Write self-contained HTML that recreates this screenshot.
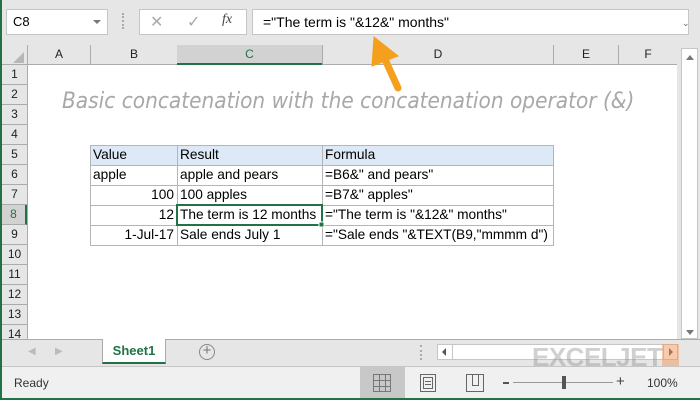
<!DOCTYPE html>
<html><head><meta charset="utf-8"><style>
*{margin:0;padding:0;box-sizing:border-box}
body{width:700px;height:400px;overflow:hidden;background:#e6e6e6;font-family:"Liberation Sans",sans-serif;position:relative}
.a{position:absolute}
.cell{position:absolute;font-size:13.7px;line-height:20px;padding:0 3px;white-space:nowrap;color:#000}
.hd{position:absolute;font-size:12px;text-align:center;line-height:19px;color:#222}
</style></head><body>
<div class="a" style="left:0;top:0;width:2px;height:400px;background:#217346"></div>
<div class="a" style="left:0;top:398px;width:700px;height:2px;background:#217346"></div>
<!-- formula bar -->
<div class="a" style="left:6px;top:9px;width:102px;height:26px;background:#fff;border:1px solid #c6c6c6"></div>
<div class="a" style="left:13px;top:14px;font-size:13px">C8</div>
<div class="a" style="left:93px;top:20px;width:0;height:0;border-left:4px solid transparent;border-right:4px solid transparent;border-top:4px solid #777"></div>
<div class="a" style="left:122px;top:13px;width:2px;height:16px;border-left:2px dotted #aaa"></div>
<div class="a" style="left:139px;top:9px;width:108px;height:26px;background:#fff;border:1px solid #c6c6c6"></div>
<div class="a" style="left:150px;top:12px;font-size:16px;color:#aaa">✕</div>
<div class="a" style="left:187px;top:12px;font-size:16px;color:#aaa">✓</div>
<div class="a" style="left:222px;top:12px;font-size:14px;font-style:italic;font-family:'Liberation Serif',serif;color:#444">fx</div>
<div class="a" style="left:252px;top:9px;width:437px;height:26px;background:#fff;border:1px solid #c6c6c6"></div>
<div class="a" style="left:263px;top:14px;font-size:14px;white-space:nowrap">="The term is "&amp;12&amp;" months"</div>
<div class="a" style="left:682px;top:18px;font-size:9px;color:#666">⌄</div>
<!-- column headers -->
<div class="a" style="left:2px;top:45px;width:675px;height:20px;background:#e6e6e6;border-bottom:1px solid #ababab"></div>
<div class="a" style="left:13px;top:52px;width:0;height:0;border-left:11px solid transparent;border-bottom:11px solid #b7b7b7"></div>
<div class="hd" style="left:27px;top:45px;width:63px;border-left:1px solid #ababab">A</div>
<div class="hd" style="left:90px;top:45px;width:87px;border-left:1px solid #ababab">B</div>
<div class="hd" style="left:177px;top:45px;width:145px;background:#d2d2d2;border-bottom:2px solid #217346;height:20px;color:#217346">C</div>
<div class="hd" style="left:322px;top:45px;width:231px;border-left:1px solid #ababab">D</div>
<div class="hd" style="left:553px;top:45px;width:65px;border-left:1px solid #ababab">E</div>
<div class="hd" style="left:618px;top:45px;width:59px;border-left:1px solid #ababab">F</div>
<!-- grid -->
<div class="a" style="left:27px;top:65px;width:650px;height:274px;background:#fff;border-left:1px solid #ababab"></div>
<div class="a" style="left:2px;top:65px;width:25px;height:274px;background:#e6e6e6">
<div class="hd" style="position:static;height:20px;border-bottom:1px solid #ababab;line-height:19px">1</div>
<div class="hd" style="position:static;height:20px;border-bottom:1px solid #ababab;line-height:19px">2</div>
<div class="hd" style="position:static;height:20px;border-bottom:1px solid #ababab;line-height:19px">3</div>
<div class="hd" style="position:static;height:20px;border-bottom:1px solid #ababab;line-height:19px">4</div>
<div class="hd" style="position:static;height:20px;border-bottom:1px solid #ababab;line-height:19px">5</div>
<div class="hd" style="position:static;height:20px;border-bottom:1px solid #ababab;line-height:19px">6</div>
<div class="hd" style="position:static;height:20px;border-bottom:1px solid #ababab;line-height:19px">7</div>
<div class="hd" style="position:static;height:20px;border-bottom:1px solid #ababab;line-height:19px;background:#d2d2d2;color:#217346;border-right:2px solid #217346">8</div>
<div class="hd" style="position:static;height:20px;border-bottom:1px solid #ababab;line-height:19px">9</div>
<div class="hd" style="position:static;height:20px;border-bottom:1px solid #ababab;line-height:19px">10</div>
<div class="hd" style="position:static;height:20px;border-bottom:1px solid #ababab;line-height:19px">11</div>
<div class="hd" style="position:static;height:20px;border-bottom:1px solid #ababab;line-height:19px">12</div>
<div class="hd" style="position:static;height:20px;border-bottom:1px solid #ababab;line-height:19px">13</div>
<div class="hd" style="position:static;height:20px;line-height:19px">14</div>
</div>
<div class="a" style="left:62px;top:89px;font-size:22px;font-style:italic;color:#a8a8a8;font-family:'DejaVu Sans',sans-serif;white-space:nowrap;transform:scaleX(0.915);transform-origin:left">Basic concatenation with the concatenation operator (&amp;)</div>
<!-- table -->
<div class="a" style="left:90px;top:145px;width:464px;height:20px;background:#dde9f6"></div>
<svg class="a" style="left:0;top:0" width="700" height="400">
<g stroke="#b5b5b5" stroke-width="1">
<line x1="90" y1="145.5" x2="554" y2="145.5"/><line x1="90" y1="165.5" x2="554" y2="165.5"/>
<line x1="90" y1="185.5" x2="554" y2="185.5"/><line x1="90" y1="205.5" x2="554" y2="205.5"/>
<line x1="90" y1="225.5" x2="554" y2="225.5"/><line x1="90" y1="245.5" x2="554" y2="245.5"/>
<line x1="90.5" y1="145" x2="90.5" y2="246"/><line x1="177.5" y1="145" x2="177.5" y2="246"/>
<line x1="322.5" y1="145" x2="322.5" y2="246"/><line x1="553.5" y1="145" x2="553.5" y2="246"/>
</g>
<rect x="177" y="205" width="145" height="20" fill="none" stroke="#217346" stroke-width="2"/>
<rect x="319" y="222" width="5" height="5" fill="#217346" stroke="#fff" stroke-width="1"/>
<g stroke="#f4a01c" stroke-linecap="round" fill="#f4a01c">
<line x1="398" y1="88" x2="383" y2="55" stroke-width="7"/>
<polygon points="374,37 398,56 372,66" stroke-width="1"/>
</g>
</svg>
<div class="cell" style="left:90px;top:145px">Value</div>
<div class="cell" style="left:177px;top:145px">Result</div>
<div class="cell" style="left:322px;top:145px">Formula</div>
<div class="cell" style="left:90px;top:165px">apple</div>
<div class="cell" style="left:177px;top:165px">apple and pears</div>
<div class="cell" style="left:322px;top:165px">=B6&amp;" and pears"</div>
<div class="cell" style="left:90px;top:185px;width:87px;text-align:right">100</div>
<div class="cell" style="left:177px;top:185px">100 apples</div>
<div class="cell" style="left:322px;top:185px">=B7&amp;" apples"</div>
<div class="cell" style="left:90px;top:205px;width:87px;text-align:right">12</div>
<div class="cell" style="left:177px;top:205px">The term is 12 months</div>
<div class="cell" style="left:322px;top:205px">="The term is "&amp;12&amp;" months"</div>
<div class="cell" style="left:90px;top:225px;width:87px;text-align:right">1-Jul-17</div>
<div class="cell" style="left:177px;top:225px">Sale ends July 1</div>
<div class="cell" style="left:322px;top:225px">="Sale ends "&amp;TEXT(B9,"mmmm d")</div>
<!-- vscroll -->
<div class="a" style="left:681px;top:48px;width:17px;height:291px;background:#fff;border:1px solid #c6c6c6"></div>
<div class="a" style="left:686px;top:55px;border-left:4px solid transparent;border-right:4px solid transparent;border-bottom:5px solid #777"></div>
<div class="a" style="left:686px;top:330px;border-left:4px solid transparent;border-right:4px solid transparent;border-top:5px solid #777"></div>
<!-- tab bar -->
<div class="a" style="left:2px;top:339px;width:698px;height:1px;background:#ababab"></div>
<div class="a" style="left:28px;top:346px;font-size:10px;color:#bbb">◀</div>
<div class="a" style="left:55px;top:346px;font-size:10px;color:#bbb">▶</div>
<div class="a" style="left:102px;top:339px;width:64px;height:25px;background:#fff;border:1px solid #ababab;border-top:none;border-bottom:2px solid #217346;text-align:center;font-size:13px;font-weight:bold;color:#217346;line-height:24px">Sheet1</div>
<div class="a" style="left:199px;top:344px;width:16px;height:16px;border:1.5px solid #888;border-radius:50%;text-align:center;line-height:12px;font-size:15px;color:#777">+</div>
<div class="a" style="left:420px;top:345px;width:2px;height:15px;border-left:2px dotted #aaa"></div>
<div class="a" style="left:437px;top:344px;width:241px;height:16px;background:#fff;border:1px solid #c6c6c6"></div>
<div class="a" style="left:452px;top:344px;width:1px;height:16px;background:#c6c6c6"></div>
<div class="a" style="left:442px;top:348px;border-top:4px solid transparent;border-bottom:4px solid transparent;border-right:4px solid #555"></div>
<div class="a" style="left:663px;top:344px;width:1px;height:16px;background:#c6c6c6"></div>
<div class="a" style="left:669px;top:348px;border-top:4px solid transparent;border-bottom:4px solid transparent;border-left:4px solid #555"></div>
<div class="a" style="left:532px;top:342px;font-size:26px;font-weight:bold;color:rgba(150,150,150,0.45);letter-spacing:-0.5px">EXCELJET</div>
<div class="a" style="left:662px;top:344px;width:17px;height:24px;background:rgba(240,150,90,0.5)"></div>
<!-- status -->
<div class="a" style="left:2px;top:366px;width:698px;height:32px;background:#f0f0f0;border-top:1px solid #c6c6c6"></div>
<div class="a" style="left:14px;top:376px;font-size:12px;color:#333">Ready</div>
<div class="a" style="left:360px;top:367px;width:45px;height:31px;background:#c8c8c8"></div>
<svg class="a" style="left:373px;top:374px" width="18" height="18"><g stroke="#777" fill="none"><rect x="0.5" y="0.5" width="17" height="17"/><line x1="6.5" y1="0" x2="6.5" y2="18"/><line x1="12.5" y1="0" x2="12.5" y2="18"/><line x1="0" y1="6.5" x2="18" y2="6.5"/><line x1="0" y1="12.5" x2="18" y2="12.5"/></g></svg>
<svg class="a" style="left:420px;top:374px" width="16" height="18"><g stroke="#666" fill="none"><rect x="0.5" y="0.5" width="15" height="17"/><rect x="3.5" y="3.5" width="9" height="11"/><line x1="5" y1="7.5" x2="11" y2="7.5"/><line x1="5" y1="10.5" x2="11" y2="10.5"/></g></svg>
<svg class="a" style="left:466px;top:374px" width="18" height="18"><g stroke="#666" fill="none"><rect x="0.5" y="0.5" width="17" height="17"/><polyline points="6.5,0 6.5,11.5 12.5,11.5 12.5,0"/></g></svg>
<div class="a" style="left:503px;top:382px;width:6px;height:2px;background:#555"></div>
<div class="a" style="left:513px;top:382px;width:100px;height:1px;background:#999"></div>
<div class="a" style="left:562px;top:376px;width:4px;height:13px;background:#555"></div>
<div class="a" style="left:616px;top:373px;font-size:15px;color:#444">+</div>
<div class="a" style="left:647px;top:376px;font-size:12px;color:#333">100%</div>
</body></html>
